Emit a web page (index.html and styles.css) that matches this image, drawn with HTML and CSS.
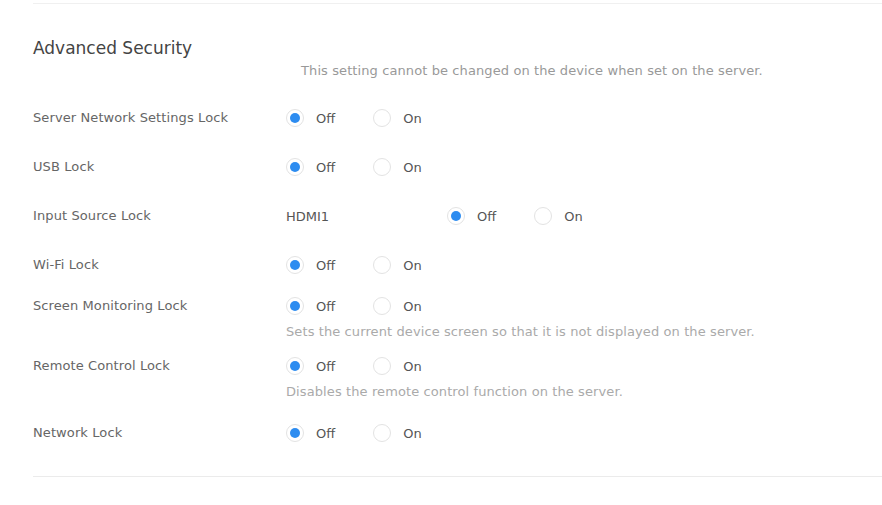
FILE: index.html
```html
<!DOCTYPE html>
<html lang="en">
<head>
  <meta charset="UTF-8">
  <title>Advanced Security</title>
  <link rel="stylesheet" href="styles.css">
</head>
<body>
  <div class="panel">
    <h2 class="panel-title">Advanced Security</h2>
    <p class="panel-note">This setting cannot be changed on the device when set on the server.</p>

    <div class="form-item">
      <label class="item-label">Server Network Settings Lock</label>
      <div class="item-control">
        <div class="radio-group">
          <span class="radio checked"></span><span class="radio-text">Off</span>
          <span class="radio"></span><span class="radio-text">On</span>
        </div>
      </div>
    </div>

    <div class="form-item">
      <label class="item-label">USB Lock</label>
      <div class="item-control">
        <div class="radio-group">
          <span class="radio checked"></span><span class="radio-text">Off</span>
          <span class="radio"></span><span class="radio-text">On</span>
        </div>
      </div>
    </div>

    <div class="form-item">
      <label class="item-label">Input Source Lock</label>
      <div class="item-control">
        <span class="source-name">HDMI1</span>
        <div class="radio-group">
          <span class="radio checked"></span><span class="radio-text">Off</span>
          <span class="radio"></span><span class="radio-text">On</span>
        </div>
      </div>
    </div>

    <div class="form-item before-help">
      <label class="item-label">Wi-Fi Lock</label>
      <div class="item-control">
        <div class="radio-group">
          <span class="radio checked"></span><span class="radio-text">Off</span>
          <span class="radio"></span><span class="radio-text">On</span>
        </div>
      </div>
    </div>

    <div class="form-item has-help tight">
      <label class="item-label">Screen Monitoring Lock</label>
      <div class="item-control">
        <div class="radio-group">
          <span class="radio checked"></span><span class="radio-text">Off</span>
          <span class="radio"></span><span class="radio-text">On</span>
        </div>
      </div>
      <p class="item-help">Sets the current device screen so that it is not displayed on the server.</p>
    </div>

    <div class="form-item has-help">
      <label class="item-label">Remote Control Lock</label>
      <div class="item-control">
        <div class="radio-group">
          <span class="radio checked"></span><span class="radio-text">Off</span>
          <span class="radio"></span><span class="radio-text">On</span>
        </div>
      </div>
      <p class="item-help">Disables the remote control function on the server.</p>
    </div>

    <div class="form-item last">
      <label class="item-label">Network Lock</label>
      <div class="item-control">
        <div class="radio-group">
          <span class="radio checked"></span><span class="radio-text">Off</span>
          <span class="radio"></span><span class="radio-text">On</span>
        </div>
      </div>
    </div>
  </div>
</body>
</html>
```

FILE: styles.css
```css
* {
  margin: 0;
  padding: 0;
  box-sizing: border-box;
}

body {
  font-family: 'DejaVu Sans', sans-serif;
  background-color: #fff;
  color: #666;
  font-size: 13px;
  padding: 3px 0 0 33px;
}

.panel {
  border-top: 1px solid #f0f0f0;
  border-bottom: 1px solid #ebebeb;
  padding: 32px 0 0;
}

.panel-title {
  font-size: 17px;
  font-weight: normal;
  color: #444;
  line-height: 24px;
}

.panel-note {
  font-size: 13px;
  letter-spacing: 0.1px;
  color: #999;
  line-height: 20px;
  margin: 1px 0 25px 268px;
}

.form-item {
  display: grid;
  grid-template-columns: 253px 1fr;
  margin-bottom: 25px;
}

.form-item.before-help {
  margin-bottom: 17px;
}

.form-item.has-help {
  margin-bottom: 19px;
}

.form-item.tight.has-help {
  margin-bottom: 12px;
}

.form-item.last {
  margin-bottom: 31px;
}

.item-label {
  line-height: 24px;
  color: #666;
  letter-spacing: 0.1px;
}

.item-control {
  display: flex;
  align-items: center;
  height: 24px;
}

.source-name {
  width: 161px;
  color: #555;
}

.radio-group {
  display: flex;
  align-items: center;
}

.radio {
  width: 18px;
  height: 18px;
  border: 1px solid #e3e3e3;
  border-radius: 50%;
  display: flex;
  align-items: center;
  justify-content: center;
}

.radio.checked::after {
  content: "";
  width: 10px;
  height: 10px;
  border-radius: 50%;
  background-color: #2d8cf0;
}

.radio-text {
  color: #555;
  margin: 0 38px 0 12px;
}

.item-help {
  grid-column: 2;
  font-size: 13px;
  letter-spacing: 0.1px;
  color: #aaa;
  line-height: 20px;
  margin-top: 4px;
}
```
